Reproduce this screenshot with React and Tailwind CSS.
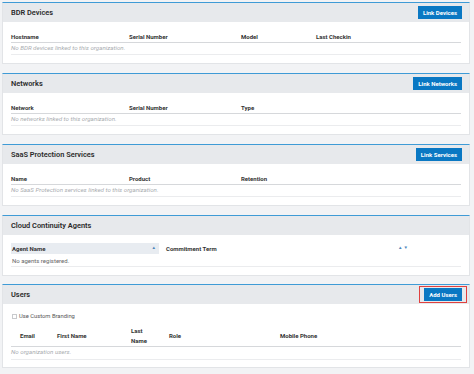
import React from 'react'

const Button = ({ children, outlined = false }) => (
  <span className="relative inline-flex">
    {outlined && (
      <span className="absolute -left-[5px] -right-[5px] -top-[2px] -bottom-[2px] border-[1.5px] border-[#e0403f]"></span>
    )}
    <button className="relative h-[13px] px-[5px] bg-[#0a78c3] text-white text-[6px] font-bold leading-none">
      {children}
    </button>
  </span>
)

const Panel = ({ title, action, className = '', children }) => (
  <section className={`bg-white border border-[#e2e4e7] border-t-[#3f9bd6] ${className}`}>
    <div className="h-[19px] bg-[#e7e9ec] flex items-center justify-between pl-[8px] pr-[7px]">
      <h2 className="text-[7.4px] font-semibold text-[#2a2a2a] leading-none">{title}</h2>
      {action}
    </div>
    {children}
  </section>
)

// simple three/four column table used by the first three panels
const SimpleTable = ({ columns, empty }) => (
  <div className="px-[8px] pt-[8px] pb-[8px]">
    <div className="grid grid-cols-[118px_112px_75px_1fr] h-[13px] items-center border-b border-[#d6d8db] text-[6px] font-bold text-[#333]">
      {columns.map((c) => (
        <span key={c}>{c}</span>
      ))}
    </div>
    <div className="h-[12px] flex items-center border-b border-[#ebecee] text-[6.2px] italic text-[#aaadb1]">
      {empty}
    </div>
  </div>
)

export default function App() {
  return (
    <div className="min-h-screen bg-[#f2f3f5] pt-[2px] pl-[2px] pr-[4px] font-['Roboto','Liberation_Sans',sans-serif]">
      <Panel title="BDR Devices" action={<Button>Link Devices</Button>} className="mb-[9px]">
        <SimpleTable
          columns={['Hostname', 'Serial Number', 'Model', 'Last Checkin']}
          empty="No BDR devices linked to this organization."
        />
      </Panel>

      <Panel title="Networks" action={<Button>Link Networks</Button>} className="mb-[9px]">
        <SimpleTable
          columns={['Network', 'Serial Number', 'Type']}
          empty="No networks linked to this organization."
        />
      </Panel>

      <Panel title="SaaS Protection Services" action={<Button>Link Services</Button>} className="mb-[9px]">
        <SimpleTable
          columns={['Name', 'Product', 'Retention']}
          empty="No SaaS Protection services linked to this organization."
        />
      </Panel>

      <Panel title="Cloud Continuity Agents" className="mb-[8px]">
        <div className="px-[8px] pt-[8px] pb-[8px]">
          <div className="flex h-[11px] text-[6px] font-bold text-[#333]">
            <div className="w-[148px] bg-[#e8ecf1] flex items-center justify-between pl-[1px] pr-[3px]">
              <span>Agent Name</span>
              <span className="text-[4.5px] text-[#4f86bb]">▲</span>
            </div>
            <div className="w-[250px] flex items-center justify-between pl-[7px]">
              <span>Commitment Term</span>
              <span className="text-[4.5px] text-[#4f86bb] tracking-[1px]">▲▼</span>
            </div>
          </div>
          <div className="h-[13px] flex items-center border-b border-[#ebecee] pl-[1px] text-[6px] text-[#666]">
            No agents registered.
          </div>
        </div>
      </Panel>

      <Panel title="Users" action={<Button outlined>Add Users</Button>}>
        <div className="px-[8px] pt-[8px] pb-[7px]">
          <label className="h-[8px] flex items-center gap-[2px] pl-[1px] text-[5.8px] text-[#555]">
            <span className="w-[5px] h-[5px] border border-[#c8cacd] bg-white"></span>
            Use Custom Branding
          </label>
          <div className="mt-[5px] grid grid-cols-[37px_74px_38px_111px_1fr] pl-[9px] h-[22px] items-center border-b border-[#d6d8db] text-[6px] font-bold text-[#333]">
            <span>Email</span>
            <span>First Name</span>
            <span className="leading-[10px]">Last<br />Name</span>
            <span>Role</span>
            <span>Mobile Phone</span>
          </div>
          <div className="h-[13px] flex items-center border-b border-[#ebecee] text-[6.2px] italic text-[#aaadb1]">
            No organization users.
          </div>
        </div>
      </Panel>
    </div>
  )
}
